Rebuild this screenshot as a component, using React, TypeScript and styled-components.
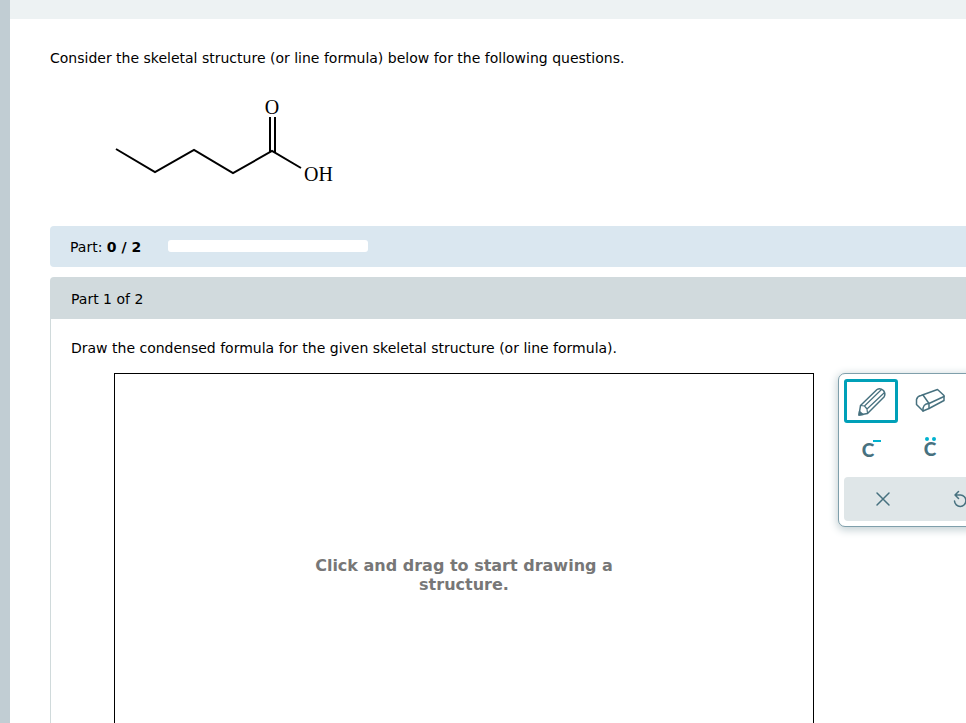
import React from "react";
import styled, { createGlobalStyle } from "styled-components";

const GlobalStyle = createGlobalStyle`
  *, *::before, *::after { box-sizing: border-box; }
  body { margin: 0; background: #fff; }
  button { font: inherit; color: inherit; border: 0; padding: 0; background: none; cursor: pointer; }
`;

const slate = "#47717f";
const teal = "#00a0b8";
const cyan = "#00b2cf";

const Page = styled.div`
  display: flex;
  height: 100vh;
  overflow: hidden;
  color: #000;
  font: 14px/18px Verdana, "DejaVu Sans", sans-serif;
`;

const SideRail = styled.aside`
  flex: 0 0 10px;
  background: #c1cdd3;
`;

const Main = styled.main`
  flex: 1;
  min-width: 0;
`;

const TopStrip = styled.header`
  height: 19px;
  background: #edf2f3;
`;

const Content = styled.div`
  padding: 30px 0 0 40px;
`;

const Paragraph = styled.p`
  margin: 0;
`;

const Molecule = styled.svg`
  display: block;
  margin: 25px 0 26px 54px;
  text {
    font: 20px "Liberation Serif", serif;
  }
`;

const ProgressBar = styled.div`
  display: flex;
  align-items: center;
  gap: 27px;
  height: 41px;
  padding-left: 20px;
  background: #dae7f0;
  border-radius: 4px 0 0 4px;
`;

const Track = styled.div`
  width: 200px;
  height: 12px;
  margin-bottom: 2px;
  background: #fff;
  border-radius: 3px;
`;

const PartPanel = styled.section`
  margin-top: 10px;
`;

const PartTitle = styled.h2`
  display: flex;
  align-items: center;
  height: 42px;
  margin: 0;
  padding: 2px 0 0 21px;
  background: #d1dadd;
  border-radius: 4px 0 0 0;
  font-size: 14px;
  font-weight: 400;
`;

const PartBody = styled.div`
  padding: 20px 0 20px 20px;
  border-left: 1px solid #d0dadb;
`;

const Workspace = styled.div`
  display: flex;
  align-items: flex-start;
  gap: 24px;
  margin: 16px 0 0 43px;
`;

const Canvas = styled.div`
  display: flex;
  flex: 0 0 700px;
  align-items: center;
  justify-content: center;
  height: 404px;
  border: 1px solid #000;
`;

const Hint = styled.p`
  width: 320px;
  margin: 0;
  color: #777;
  font-size: 16px;
  line-height: 19px;
  font-weight: 700;
  text-align: center;
`;

const Toolbox = styled.div`
  flex: 0 0 246px;
  padding: 5px;
  border: 1px solid #7f9fab;
  border-radius: 7px;
  background: #fff;
  box-shadow: 0 2px 8px 1px #c3d0d4;
`;

const ToolRow = styled.div`
  display: flex;
  gap: 5px;
  margin-bottom: 4px;

  &:last-of-type {
    margin-bottom: 0;
  }
`;

const ToolButton = styled.button<{ $active?: boolean }>`
  display: grid;
  place-items: center;
  width: 54px;
  height: 44px;
  border: 3px solid ${(p) => (p.$active ? teal : "transparent")};
  border-radius: 3px;

  svg {
    display: block;
  }
`;

const ActionBar = styled.footer`
  display: grid;
  grid-template-columns: repeat(3, 1fr);
  height: 44px;
  margin-top: 6px;
  background: #dfe6e8;
  border-radius: 4px;
`;

const ActionButton = styled.button`
  display: grid;
  place-items: center;
`;

const AtomSymbol = styled.text`
  font: 900 19px Lato, sans-serif;
  fill: ${slate};
  stroke: none;
`;

const Icon = ({ children, width = 1.5 }: { children: React.ReactNode; width?: number }) => (
  <svg
    width="32"
    height="32"
    viewBox="0 0 32 32"
    fill="none"
    stroke={slate}
    strokeWidth={width}
    strokeLinecap="round"
    strokeLinejoin="round"
    aria-hidden="true"
  >
    {children}
  </svg>
);

export default function App() {
  return (
    <>
      <GlobalStyle />
      <Page>
        <SideRail />
        <Main>
          <TopStrip />
          <Content>
            <Paragraph>
              Consider the skeletal structure (or line formula) below for the following questions.
            </Paragraph>

            <Molecule width="240" height="108" viewBox="0 0 240 108" role="img" aria-label="Skeletal structure">
              <g fill="none" stroke="#000" strokeWidth="2">
                <path d="M12 57L51 80L90 58L129 81L168 59L197 76" />
                <path d="M166 25V60M171 25V60" />
              </g>
              <text x="168" y="22" textAnchor="middle">O</text>
              <text x="200" y="89">OH</text>
            </Molecule>

            <ProgressBar>
              <span>
                Part: <b>0 / 2</b>
              </span>
              <Track role="progressbar" aria-label="Parts completed" aria-valuemin={0} aria-valuemax={2} aria-valuenow={0} />
            </ProgressBar>

            <PartPanel>
              <PartTitle>Part 1 of 2</PartTitle>
              <PartBody>
                <Paragraph>
                  Draw the condensed formula for the given skeletal structure (or line formula).
                </Paragraph>
                <Workspace>
                  <Canvas>
                    <Hint>Click and drag to start drawing a structure.</Hint>
                  </Canvas>
                  <Toolbox role="toolbar" aria-label="Drawing tools">
                    <ToolRow>
                      <ToolButton type="button" $active aria-pressed="true" aria-label="Draw">
                        <Icon>
                          <path d="M4 30L5.500 20.500L22 4.500Q25 2.500 28.500 5.500Q31 9 29 12L12.500 28.500Z" />
                          <path d="M5.500 20.500L9.500 21L12 24L12.500 28.500M9.500 21L26 5M12 24L29 8" strokeWidth="1.200" />
                          <path d="M4 30L4.500 26.500L8 29.500Z" fill={slate} />
                        </Icon>
                      </ToolButton>
                      <ToolButton type="button" aria-label="Erase">
                        <Icon>
                          <path d="M7 10.500L23.500 4.500L30 10.500V15.500L15 23.500L9 26L2.500 19.500V14.500Q3.500 11 7 10.500Z" />
                          <path d="M9 10L15 18.500L30 11.500M15 18.500V23.500M15 18.500Q8.500 18.500 9 26" />
                        </Icon>
                      </ToolButton>
                    </ToolRow>
                    <ToolRow>
                      <ToolButton type="button" aria-label="Negative charge">
                        <Icon>
                          <AtomSymbol x="13" y="24" textAnchor="middle">C</AtomSymbol>
                          <path d="M18 8H26" stroke={cyan} strokeWidth="2" strokeLinecap="butt" />
                        </Icon>
                      </ToolButton>
                      <ToolButton type="button" aria-label="Lone pair">
                        <Icon>
                          <AtomSymbol x="16" y="23" textAnchor="middle">C</AtomSymbol>
                          <g fill={cyan} stroke="none">
                            <circle cx="13" cy="6" r="2" />
                            <circle cx="20" cy="6" r="2" />
                          </g>
                        </Icon>
                      </ToolButton>
                    </ToolRow>
                    <ActionBar>
                      <ActionButton type="button" aria-label="Clear">
                        <Icon>
                          <path d="M10 10L22 22M22 10L10 22" />
                        </Icon>
                      </ActionButton>
                      <ActionButton type="button" aria-label="Undo">
                        <Icon>
                          <path d="M13.500 8.500L10 12L13.500 15.500M10 12H15.500A5.700 5.700 0 1 1 9.500 18" />
                        </Icon>
                      </ActionButton>
                    </ActionBar>
                  </Toolbox>
                </Workspace>
              </PartBody>
            </PartPanel>
          </Content>
        </Main>
      </Page>
    </>
  );
}
